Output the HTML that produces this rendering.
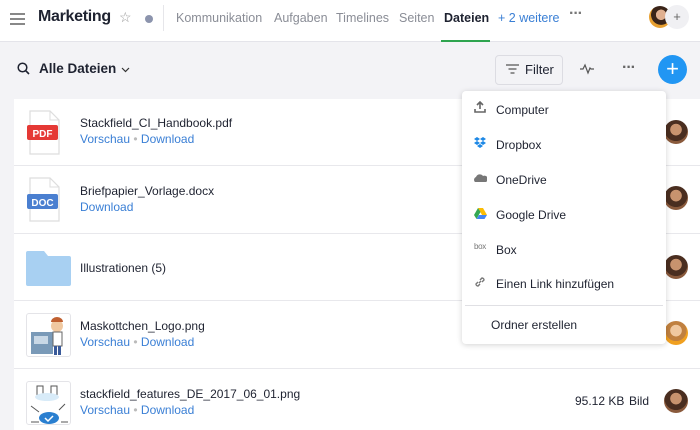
<!DOCTYPE html>
<html><head><style>
*{margin:0;padding:0;box-sizing:border-box}
body{width:700px;height:430px;overflow:hidden;background:#f3f3f6;font-family:"Liberation Sans",sans-serif;position:relative;color:#1e2230}
.hdr{position:absolute;left:0;top:0;width:700px;height:42px;background:#fff;border-bottom:1px solid #e4e4ea}
.a{position:absolute}
.nav{top:11px;font-size:12.5px;color:#8a8d96}
.list{position:absolute;left:14px;top:99px;width:686px;height:331px;background:#fff}
.row{position:absolute;left:0;width:686px;border-bottom:1px solid #e8e8ec}
.fn{position:absolute;left:66px;font-size:12px;color:#1e2230}
.lk{position:absolute;left:66px;font-size:12px;color:#3a7fd5}
.lk i{font-style:normal;color:#bbb}
.av{position:absolute;left:650px;width:24px;height:24px;border-radius:50%;background:radial-gradient(circle at 50% 40%,#c8936e 0 30%,#4a2e20 32% 60%,#8a5a3c 62%)}
.menu{position:absolute;left:462px;top:91px;width:204px;height:253px;background:#fff;border-radius:4px;box-shadow:0 1px 6px rgba(0,0,0,.18)}
.mi{position:absolute;left:34px;font-size:12px;color:#1e2230}
.ic{position:absolute;left:12px}
.dots{font-weight:bold;font-size:16px;letter-spacing:-1px;color:#777}
</style></head><body>
<div class="hdr">
 <div class="a" style="left:10px;top:13px;width:15px;height:2px;background:#888;box-shadow:0 5px 0 #888,0 10px 0 #888"></div>
 <div class="a" style="left:38px;top:8px;font-size:16px;font-weight:bold;color:#1e2230;letter-spacing:-0.3px">Marketing</div>
 <div class="a" style="left:119px;top:9px;font-size:14px;color:#999">☆</div>
 <div class="a" style="left:145px;top:15px;width:8px;height:8px;border-radius:50%;background:#8c94ad"></div>
 <div class="a" style="left:163px;top:5px;width:1px;height:26px;background:#e6e6ea"></div>
 <div class="a nav" style="left:176px">Kommunikation</div>
 <div class="a nav" style="left:274px">Aufgaben</div>
 <div class="a nav" style="left:336px">Timelines</div>
 <div class="a nav" style="left:399px">Seiten</div>
 <div class="a nav" style="left:444px;color:#1e2230;font-weight:bold">Dateien</div>
 <div class="a" style="left:441px;top:40px;width:49px;height:2px;background:#2ea44f"></div>
 <div class="a nav" style="left:498px;color:#3a7fd5">+ 2 weitere</div>
 <div class="a dots" style="left:569px;top:5px">···</div>
 <div class="a" style="left:649px;top:6px;width:22px;height:22px;border-radius:50%;background:radial-gradient(circle at 55% 40%,#e0b090 0 28%,#3a2418 30% 55%,#e8a030 57%)"></div>
 <div class="a" style="left:665px;top:5px;width:24px;height:24px;border-radius:50%;background:#f0f0f3;color:#666;font-size:13px;text-align:center;line-height:24px">+</div>
</div>
<svg class="a" style="left:17px;top:62px" width="13" height="13" viewBox="0 0 13 13"><circle cx="5.5" cy="5.5" r="4.3" fill="none" stroke="#1e2230" stroke-width="1.5"/><path d="M8.6 8.6L12 12" stroke="#1e2230" stroke-width="1.6"/></svg>
<div class="a" style="left:39px;top:61px;font-size:13.5px;font-weight:bold">Alle Dateien</div>
<svg class="a" style="left:121px;top:67px" width="9" height="6"><path d="M1 1l3.5 3.5L8 1" fill="none" stroke="#333" stroke-width="1.2"/></svg>
<div class="a" style="left:495px;top:55px;width:68px;height:30px;border:1px solid #dcdce2;border-radius:4px;background:#f3f3f6"></div>
<svg class="a" style="left:506px;top:64px" width="13" height="10"><path d="M0 1h13M2.5 5h8M4.5 9h4" stroke="#555" stroke-width="1.3"/></svg>
<div class="a" style="left:525px;top:62px;font-size:13px">Filter</div>
<svg class="a" style="left:580px;top:63px" width="14" height="12"><path d="M0 6h3l2-4 3 8 2-5 1 1h3" fill="none" stroke="#555" stroke-width="1.2"/></svg>
<div class="a dots" style="left:622px;top:59px;color:#666">···</div>
<div class="a" style="left:658px;top:55px;width:29px;height:29px;border-radius:50%;background:#2196f3;color:#fff;font-size:22px;text-align:center;line-height:28px">+</div>
<div class="list">
 <div class="row" style="top:0;height:67px">
  <svg class="a" style="left:13px;top:11px" width="34" height="46"><path d="M3 1h20l9 9v34H3z" fill="#fff" stroke="#ddd" stroke-width="1.2"/><path d="M23 1v9h9" fill="none" stroke="#ddd"/><rect x="0" y="15" width="31" height="15" rx="2" fill="#e53935"/><text x="15.5" y="27" font-size="10" font-weight="bold" fill="#fff" text-anchor="middle" font-family="Liberation Sans">PDF</text></svg>
  <div class="fn" style="top:17px">Stackfield_CI_Handbook.pdf</div>
  <div class="lk" style="top:33px">Vorschau <i>•</i> Download</div>
  <div class="av" style="top:21px"></div>
 </div>
 <div class="row" style="top:67px;height:68px">
  <svg class="a" style="left:13px;top:11px" width="34" height="46"><path d="M3 1h20l9 9v34H3z" fill="#fff" stroke="#ddd" stroke-width="1.2"/><path d="M23 1v9h9" fill="none" stroke="#ddd"/><rect x="0" y="17" width="31" height="15" rx="2" fill="#4a7fd0"/><text x="15.5" y="29" font-size="10" font-weight="bold" fill="#fff" text-anchor="middle" font-family="Liberation Sans">DOC</text></svg>
  <div class="fn" style="top:18px">Briefpapier_Vorlage.docx</div>
  <div class="lk" style="top:34px">Download</div>
  <div class="av" style="top:20px"></div>
 </div>
 <div class="row" style="top:135px;height:67px">
  <svg class="a" style="left:12px;top:15px" width="45" height="38"><path d="M2 2h16l4 5h21a2 2 0 0 1 2 2v26a2 2 0 0 1-2 2H2a2 2 0 0 1-2-2V4a2 2 0 0 1 2-2z" fill="#a8d0f2"/></svg>
  <div class="fn" style="top:27px">Illustrationen (5)</div>
  <div class="av" style="top:21px"></div>
 </div>
 <div class="row" style="top:202px;height:68px">
  <svg class="a" style="left:12px;top:12px;border:1px solid #e4e4e8;border-radius:3px" width="45" height="44"><rect x="4" y="18" width="22" height="22" fill="#7a9ab8"/><rect x="7" y="22" width="14" height="8" fill="#c9d8e6"/><circle cx="30" cy="12" r="6" fill="#f0c8a0"/><path d="M24 8a6 5 0 0 1 12 0" fill="#c06030"/><rect x="26" y="18" width="9" height="14" fill="#fff" stroke="#666"/><rect x="27" y="32" width="3" height="9" fill="#3a5a9a"/><rect x="31" y="32" width="3" height="9" fill="#3a5a9a"/></svg>
  <div class="fn" style="top:18px">Maskottchen_Logo.png</div>
  <div class="lk" style="top:34px">Vorschau <i>•</i> Download</div>
  <div class="av" style="top:20px;background:radial-gradient(circle at 50% 40%,#f0c8a0 0 30%,#c08040 32% 55%,#f0a020 57%)"></div>
 </div>
 <div class="row" style="top:270px;height:61px;border:none">
  <svg class="a" style="left:12px;top:12px;border:1px solid #e4e4e8;border-radius:3px" width="45" height="44"><rect x="10" y="4" width="6" height="9" fill="none" stroke="#555"/><rect x="24" y="4" width="6" height="9" fill="none" stroke="#555"/><ellipse cx="20" cy="15" rx="12" ry="4" fill="#d8ebf8"/><path d="M4 24l8 6M38 22l-6 6M4 40h8M34 40h7" stroke="#555"/><ellipse cx="22" cy="36" rx="10" ry="6" fill="#2a7fd0"/><path d="M18 36l3 3 5-5" stroke="#fff" stroke-width="1.5" fill="none"/></svg>
  <div class="fn" style="top:18px">stackfield_features_DE_2017_06_01.png</div>
  <div class="lk" style="top:34px">Vorschau <i>•</i> Download</div>
  <div class="a" style="left:561px;top:25px;font-size:12px">95.12 KB</div>
  <div class="a" style="left:615px;top:25px;font-size:12px">Bild</div>
  <div class="av" style="top:20px"></div>
 </div>
</div>
<div class="menu">
 <svg class="ic" style="top:10px" width="12" height="12"><path d="M6 1v7M3 4l3-3 3 3" fill="none" stroke="#666" stroke-width="1.6"/><path d="M1 8v3h10V8" fill="none" stroke="#666" stroke-width="1.6"/></svg>
 <div class="mi" style="top:12px">Computer</div>
 <svg class="ic" style="top:46px" width="12" height="11"><path d="M3 0l3 2-3 2-3-2zM9 0l3 2-3 2-3-2zM3 4l3 2-3 2-3-2zM9 4l3 2-3 2-3-2zM3 9l3-2 3 2-3 2z" fill="#1e88e5"/></svg>
 <div class="mi" style="top:47px">Dropbox</div>
 <svg class="ic" style="top:83px" width="13" height="8"><path d="M1 8a3 3 0 0 1 1-5 4 4 0 0 1 7-1 3 3 0 0 1 3 6z" fill="#777"/></svg>
 <div class="mi" style="top:82px">OneDrive</div>
 <svg class="ic" style="top:117px" width="13" height="11"><path d="M4 0h5l4 7h-5z" fill="#fbbc04"/><path d="M4 0L0 7l2.5 4L6.5 4z" fill="#34a853"/><path d="M2.5 11h8l2.5-4H5z" fill="#4285f4"/></svg>
 <div class="mi" style="top:117px">Google Drive</div>
 <div class="ic" style="top:151px;font-size:8px;color:#777;letter-spacing:-.3px">box</div>
 <div class="mi" style="top:152px">Box</div>
 <svg class="ic" style="top:185px" width="12" height="12"><path d="M5 7l2-2M4 6L2 8a2 2 0 0 0 2 2l2-2M8 6l2-2a2 2 0 0 0-2-2L6 4" fill="none" stroke="#777" stroke-width="1.4"/></svg>
 <div class="mi" style="top:186px">Einen Link hinzufügen</div>
 <div class="a" style="left:3px;top:214px;width:198px;height:1px;background:#e0e0e4"></div>
 <div class="mi" style="left:29px;top:227px">Ordner erstellen</div>
</div>
</body></html>
